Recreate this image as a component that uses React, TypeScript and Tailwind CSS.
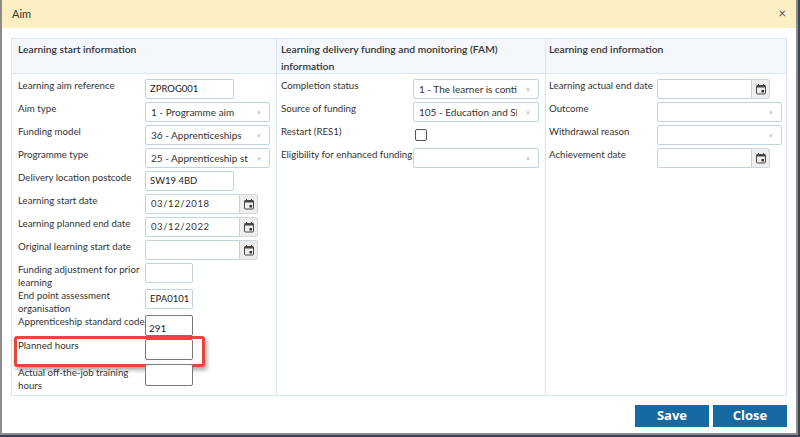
import { ReactNode } from "react";

const font = { fontFamily: "Lato, 'Liberation Sans', sans-serif" };

const CalendarIcon = () => (
  <svg width="12" height="12" viewBox="0 0 12 12" fill="none">
    <rect x="1.5" y="2.5" width="9" height="8.5" rx="1" stroke="#444" strokeWidth="1" />
    <rect x="1.5" y="2.5" width="9" height="2" fill="#444" />
    <rect x="3" y="1" width="1" height="2.5" fill="#444" />
    <rect x="8" y="1" width="1" height="2.5" fill="#444" />
    <rect x="6.5" y="7" width="2.5" height="2.5" fill="#333" />
  </svg>
);

const TextBox = ({ value = "", w }: { value?: string; w: string }) => (
  <div className={`${w} h-[20px] border border-[#bfd3e2] rounded-[2px] bg-white px-[4px] flex items-center text-[9.5px] text-[#222]`}>
    {value}
  </div>
);

const SelectBox = ({ value = "", w = "w-[125px]" }: { value?: string; w?: string }) => (
  <div className={`${w} h-[20px] border border-[#bfd3e2] rounded-[2px] bg-white pl-[5px] pr-[7px] flex items-center text-[10px] text-[#333]`}>
    <span className="flex-1 min-w-0 whitespace-nowrap overflow-hidden">{value}</span>
    <span className="text-[#c8c8c8] text-[6px] ml-[8px] shrink-0">▼</span>
  </div>
);

const DateBox = ({ value = "" }: { value?: string }) => (
  <div className="flex h-[20px]">
    <div className="w-[95px] h-[20px] border border-[#bfd3e2] rounded-l-[2px] bg-white px-[5px] flex items-center text-[9.5px] text-[#333] tracking-[0.6px]">
      {value}
    </div>
    <div className="w-[18px] h-[20px] border border-l-0 border-[#cfd6dc] rounded-r-[3px] bg-[#eeeeee] flex items-center justify-center">
      <CalendarIcon />
    </div>
  </div>
);

const Row = ({ label, labelW, children, extra, pb = "pb-[3px]" }: { label: ReactNode; labelW: string; children: ReactNode; extra?: ReactNode; pb?: string }) => (
  <div className={`relative flex items-start ${pb}`}>
    <div className={`${labelW} shrink-0 whitespace-nowrap text-[9.7px] leading-[13px] text-[#333]`}>{label}</div>
    {children}
    {extra}
  </div>
);

const Header = ({ children, px }: { children: ReactNode; px: string }) => (
  <div className={`h-[35px] bg-[#f4f7fb] border-b border-[#d9e6f0] ${px} pt-[2px] text-[10.3px] leading-[17px] font-semibold text-[#333]`}>
    {children}
  </div>
);

export default function App() {
  const c1 = "w-[127px]";
  const c2 = "w-[132px]";
  const c3 = "w-[108px]";

  return (
    <div className="w-[800px] h-[437px] bg-[#3b4652]" style={font}>
      <div className="w-[798px] h-[435px] bg-white border-l-[2px] border-r-[2px] border-b-[2px] border-[#8c8c8c] flex flex-col">
        <div className="h-[28px] bg-[#fcefc3] flex items-center justify-between pl-[10px] pr-[10px] text-[11px] text-[#333]">
          <span>Aim</span>
          <span className="text-[13px] text-[#555]">×</span>
        </div>

        <div className="flex-1 px-[9px] pt-[10px]">
          <div className="h-[358px] w-[776px] border border-[#d9e6f0] grid grid-cols-[265px_269px_1fr]">
            <div className="border-r border-[#d9e6f0] flex flex-col">
              <Header px="px-[6px]">Learning start information</Header>
              <div className="px-[6px] pt-[5px]">
                <Row label="Learning aim reference" labelW={c1}><TextBox value="ZPROG001" w="w-[89px]" /></Row>
                <Row label="Aim type" labelW={c1}><SelectBox value="1 - Programme aim" /></Row>
                <Row label="Funding model" labelW={c1}><SelectBox value="36 - Apprenticeships" /></Row>
                <Row label="Programme type" labelW={c1}><SelectBox value="25 - Apprenticeship standard" /></Row>
                <Row label="Delivery location postcode" labelW={c1}><TextBox value="SW19 4BD" w="w-[89px]" /></Row>
                <Row label="Learning start date" labelW={c1}><DateBox value="03/12/2018" /></Row>
                <Row label="Learning planned end date" labelW={c1}><DateBox value="03/12/2022" /></Row>
                <Row label="Original learning start date" labelW={c1}><DateBox /></Row>
                <Row pb="pb-0" label={<>Funding adjustment for prior<br />learning</>} labelW={c1}><TextBox w="w-[48px]" /></Row>
                <Row pb="pb-0" label={<>End point assessment<br />organisation</>} labelW={c1}><TextBox value="EPA0101" w="w-[48px]" /></Row>
                <Row label="Apprenticeship standard code" labelW={c1}>
                  <div className="w-[48px] h-[21px] border border-[#777] rounded-[2px] bg-white px-[3px] pt-[5px] text-[10px] text-[#222]">291</div>
                </Row>
                <Row
                  pb="pb-[4px]"
                  label="Planned hours"
                  labelW={c1}
                  extra={<div className="absolute left-[-4px] top-[-3px] w-[191px] h-[31px] border-[3px] border-[#e2483c] rounded-[3px] shadow-[2px_3px_4px_rgba(0,0,0,0.35)]" />}
                >
                  <div className="w-[48px] h-[21px] border border-[#777] rounded-[2px] bg-white" />
                </Row>
                <Row pb="pb-0" label={<div className="pt-[2px]">Actual off-the-job training<br />hours</div>} labelW={c1}>
                  <div className="w-[48px] h-[22px] border border-[#777] rounded-[2px] bg-white" />
                </Row>
              </div>
            </div>

            <div className="border-r border-[#d9e6f0] flex flex-col">
              <Header px="px-[4px]">Learning delivery funding and monitoring (FAM)<br />information</Header>
              <div className="px-[4px] pt-[5px]">
                <Row label="Completion status" labelW={c2}><SelectBox value="1 - The learner is continuing" w="w-[126px]" /></Row>
                <Row label="Source of funding" labelW={c2}><SelectBox value="105 - Education and Skills Funding Agency" w="w-[126px]" /></Row>
                <Row label="Restart (RES1)" labelW={c2}>
                  <div className="h-[20px] flex items-center pl-[2px]">
                    <div className="w-[12px] h-[12px] border border-[#555] rounded-[2px] bg-white" />
                  </div>
                </Row>
                <Row label="Eligibility for enhanced funding" labelW={c2}><SelectBox w="w-[126px]" /></Row>
              </div>
            </div>

            <div className="flex flex-col">
              <Header px="px-[3px]">Learning end information</Header>
              <div className="px-[3px] pt-[5px]">
                <Row label="Learning actual end date" labelW={c3}><DateBox /></Row>
                <Row label="Outcome" labelW={c3}><SelectBox /></Row>
                <Row label="Withdrawal reason" labelW={c3}><SelectBox /></Row>
                <Row label="Achievement date" labelW={c3}><DateBox /></Row>
              </div>
            </div>
          </div>

          <div className="flex justify-end gap-[4px] pt-[9px]">
            <button className="w-[74px] h-[22px] bg-[#176aa1] text-white text-[13px] font-bold" style={{ fontFamily: "'Open Sans', 'Liberation Sans', sans-serif" }}>Save</button>
            <button className="w-[74px] h-[22px] bg-[#176aa1] text-white text-[13px] font-bold" style={{ fontFamily: "'Open Sans', 'Liberation Sans', sans-serif" }}>Close</button>
          </div>
        </div>
      </div>
    </div>
  );
}
